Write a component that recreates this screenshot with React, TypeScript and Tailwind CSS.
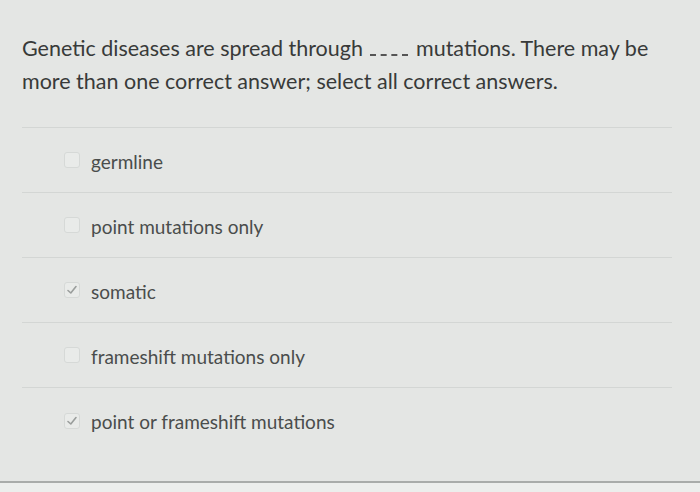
import React from "react";

const options = [
  { label: "germline", checked: false },
  { label: "point mutations only", checked: false },
  { label: "somatic", checked: true },
  { label: "frameshift mutations only", checked: false },
  { label: "point or frameshift mutations", checked: true },
];

function Box({ checked }: { checked: boolean }) {
  return (
    <div className="w-[16px] h-[16px] rounded-[3px] border border-[#d6d9d7] bg-[#e9ebe9] flex items-center justify-center">
      {checked && (
        <svg width="12" height="12" viewBox="0 0 12 12">
          <path d="M2 6.5 L4.8 9 L10 2.5" fill="none" stroke="#9a9e9c" strokeWidth="1.6" strokeLinecap="round" strokeLinejoin="round" />
        </svg>
      )}
    </div>
  );
}

export default function App() {
  return (
    <div
      className="w-[700px] h-[492px] bg-[#e4e6e4] overflow-hidden flex flex-col"
      style={{ fontFamily: "Lato, 'Open Sans', sans-serif" }}
    >
      <div className="pl-[22px] pr-[10px] pt-[32px] text-[21.5px] leading-[33px] text-[#383a39]">
        Genetic diseases are spread through{" "}
        <span className="inline-block w-[38px] border-b-2 border-dashed border-[#555] align-baseline mx-[2px]"></span>{" "}
        mutations. There may be
        <br />
        more than one correct answer; select all correct answers.
      </div>
      <div className="mt-[29px] mx-[22px] mr-[28px] border-t border-[#d3d6d4]">
        {options.map((o, i) => (
          <div
            key={o.label}
            className={`h-[65px] flex items-center pl-[42px] gap-[11px] ${i < options.length - 1 ? "border-b border-[#d3d6d4]" : ""}`}
          >
            <Box checked={o.checked} />
            <span className="text-[19px] text-[#4a4d4c] leading-none pt-[2px]">{o.label}</span>
          </div>
        ))}
      </div>
      <div className="mt-[28px] border-t-2 border-[#a9acaa]"></div>
      <div className="flex-1 bg-[#eceeec]"></div>
    </div>
  );
}
